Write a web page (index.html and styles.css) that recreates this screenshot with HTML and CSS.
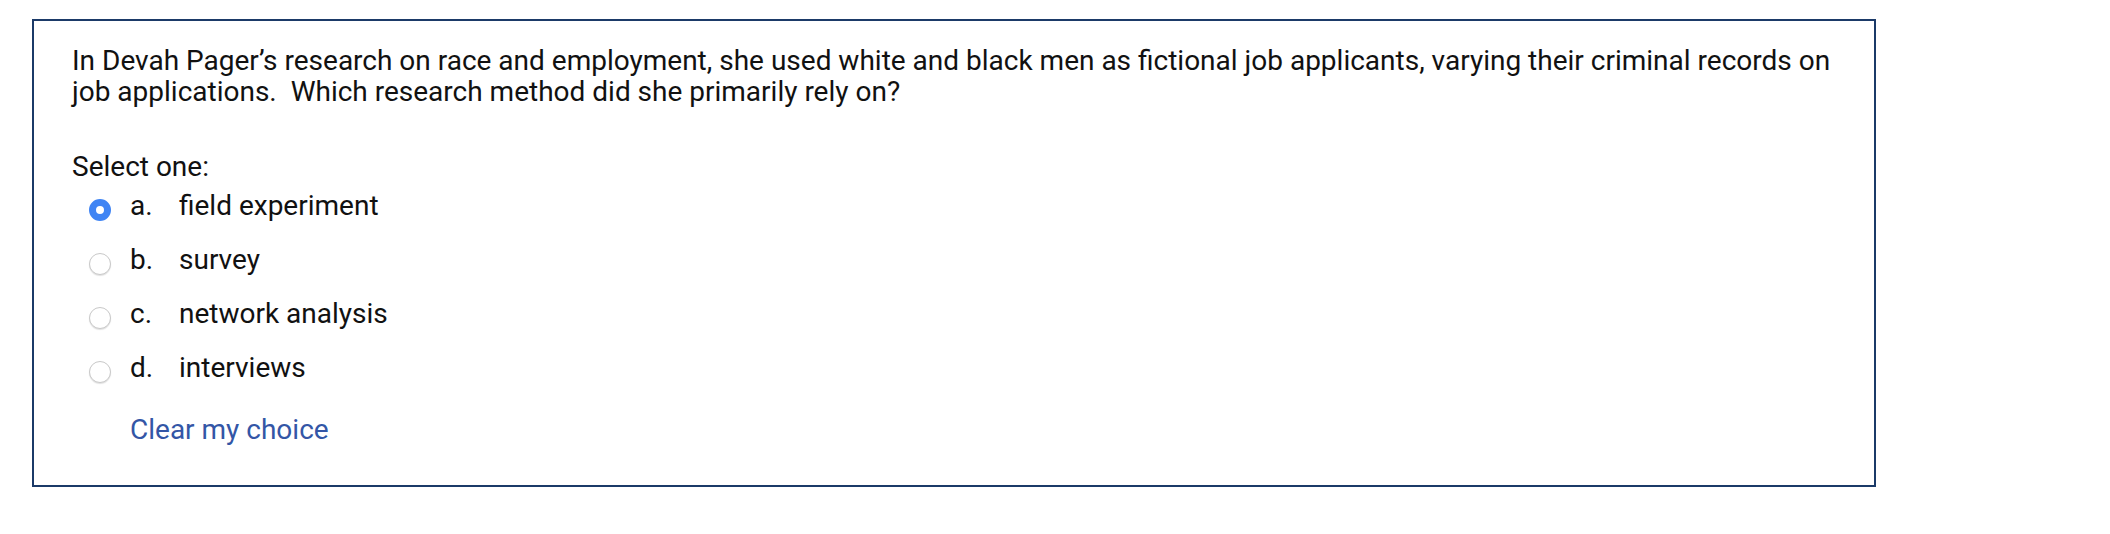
FILE: index.html
```html
<!DOCTYPE html>
<html lang="en">
<head>
    <meta charset="UTF-8">
    <title>Question</title>
    <link rel="stylesheet" href="styles.css">
</head>
<body>
    <div class="que">
        <div class="qtext">
            In Devah Pager’s research on race and employment, she used white and black men as fictional job applicants, varying their criminal records on job applications.&nbsp; Which research method did she primarily rely on?
        </div>
        <div class="prompt">Select one:</div>
        <div class="answer">
            <div class="opt">
                <span class="radio checked"></span>
                <span class="opt-letter">a.</span>
                <span class="opt-text">field experiment</span>
            </div>
            <div class="opt">
                <span class="radio"></span>
                <span class="opt-letter">b.</span>
                <span class="opt-text">survey</span>
            </div>
            <div class="opt">
                <span class="radio"></span>
                <span class="opt-letter">c.</span>
                <span class="opt-text">network analysis</span>
            </div>
            <div class="opt">
                <span class="radio"></span>
                <span class="opt-letter">d.</span>
                <span class="opt-text">interviews</span>
            </div>
        </div>
        <div class="actions">
            <a href="#" class="clear-choice">Clear my choice</a>
        </div>
    </div>
</body>
</html>
```

FILE: styles.css
```css
* {
    margin: 0;
    padding: 0;
    box-sizing: border-box;
}

body {
    background-color: #fff;
    font-family: Roboto, "Liberation Sans", sans-serif;
    font-size: 28px;
    color: #111;
    padding: 19px 0 0 32px;
}

.que {
    width: 1844px;
    height: 468px;
    border: 2px solid #1b3a68;
    padding: 24px 38px 0 38px;
}

.qtext {
    line-height: 31px;
}

.prompt {
    line-height: 31px;
    margin-top: 44px;
}

.answer {
    margin-top: 6px;
    padding-left: 17px;
}

.opt {
    display: flex;
    align-items: flex-start;
    height: 36px;
    line-height: 36px;
    margin-bottom: 18px;
}

.radio {
    width: 22px;
    height: 22px;
    margin-top: 11px;
    margin-right: 19px;
    border-radius: 50%;
    background-color: #fff;
    border: 1px solid #c9c9c9;
    box-shadow: 0 1px 1px rgba(0, 0, 0, 0.12);
    flex-shrink: 0;
}

.radio.checked {
    border: 7px solid #3f84f4;
    box-shadow: none;
}

.opt-letter {
    width: 49px;
}

.actions {
    margin-top: 28px;
    padding-left: 58px;
    line-height: 31px;
}

.clear-choice {
    color: #3356a6;
    text-decoration: none;
}
```
